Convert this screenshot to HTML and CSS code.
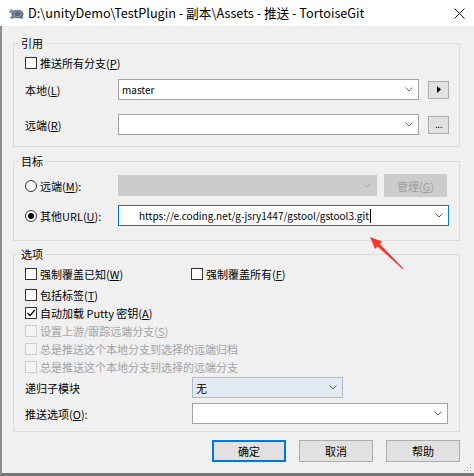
FILE: index.html
```html
<!DOCTYPE html>
<html lang="zh-CN">
<head>
<meta charset="utf-8">
<title>推送 - TortoiseGit</title>
<link rel="stylesheet" href="styles.css">
</head>
<body>
<div class="window">
  <div class="titlebar">
    <svg class="app-icon" viewBox="0 0 16 14" aria-hidden="true">
      <ellipse cx="3" cy="11.5" rx="1.8" ry="1.3" fill="#6b7b90"/>
      <ellipse cx="12.5" cy="11.5" rx="1.8" ry="1.3" fill="#6b7b90"/>
      <ellipse cx="8.5" cy="8" rx="6" ry="4.3" fill="#56677e"/>
      <path d="M5 6.5 L8.5 4.5 L12 6.5 L12 9.5 L8.5 11 L5 9.5 Z" fill="none" stroke="#9fb0c6" stroke-width="0.9"/>
      <circle cx="2.3" cy="5.3" r="2.1" fill="#7c8da4"/>
      <circle cx="1.6" cy="4.8" r="0.5" fill="#fff"/>
    </svg>
    <span class="title">D:\unityDemo\TestPlugin - 副本\Assets - 推送 - TortoiseGit</span>
    <svg class="close" viewBox="0 0 11 11" aria-hidden="true">
      <path d="M0.5 0.5 L10.5 10.5 M10.5 0.5 L0.5 10.5" stroke="#111" stroke-width="1"/>
    </svg>
  </div>

  <div class="dialog">
    <fieldset class="group g-ref">
      <legend>引用</legend>
      <div class="check"><span class="cb"></span>推送所有分支(<u>P</u>)</div>
      <div class="field ref-row r-local">
        <span class="lbl">本地(<u>L</u>)</span>
        <div class="combo"><span class="val lat">master</span><svg class="chev" viewBox="0 0 8 5"><path d="M0.5 0.5 L4 4 L7.5 0.5" fill="none" stroke="#666" stroke-width="1"/></svg></div>
        <div class="mini"><svg class="tri" viewBox="0 0 4 7"><path d="M0 0 L4 3.5 L0 7 Z" fill="#000"/></svg></div>
      </div>
      <div class="field ref-row r-remote">
        <span class="lbl">远端(<u>R</u>)</span>
        <div class="combo"><span class="val"></span><svg class="chev" viewBox="0 0 8 5"><path d="M0.5 0.5 L4 4 L7.5 0.5" fill="none" stroke="#666" stroke-width="1"/></svg></div>
        <div class="mini dots">...</div>
      </div>
    </fieldset>

    <fieldset class="group g-target">
      <legend>目标</legend>
      <div class="field t-row1">
        <span class="radio-lbl"><span class="rb"></span>远端(<u>M</u>):</span>
        <div class="combo disabled"><span class="val"></span><svg class="chev" viewBox="0 0 8 5"><path d="M0.5 0.5 L4 4 L7.5 0.5" fill="none" stroke="#aaa" stroke-width="1"/></svg></div>
        <div class="btn manage">管理(<u>G</u>)</div>
      </div>
      <div class="field t-row2">
        <span class="radio-lbl"><span class="rb on"></span>其他URL(<u>U</u>):</span>
        <div class="combo focus"><span class="val url lat">https://e.coding.net/g-jsry1447/gstool/gstool3.git<span class="caret"></span></span><svg class="chev" viewBox="0 0 8 5"><path d="M0.5 0.5 L4 4 L7.5 0.5" fill="none" stroke="#555" stroke-width="1"/></svg></div>
      </div>
    </fieldset>

    <fieldset class="group g-opts">
      <legend>选项</legend>
      <div class="opt-row first">
        <div class="check"><span class="cb"></span>强制覆盖已知(<u>W</u>)</div>
        <div class="check"><span class="cb"></span>强制覆盖所有(<u>F</u>)</div>
      </div>
      <div class="opt-row"><div class="check"><span class="cb"></span>包括标签(<u>T</u>)</div></div>
      <div class="opt-row"><div class="check"><span class="cb checked"><svg viewBox="0 0 10 10"><path d="M1.5 5 L4 7.5 L8.8 2" fill="none" stroke="#000" stroke-width="1.2"/></svg></span>自动加载 Putty 密钥(<u>A</u>)</div></div>
      <div class="opt-row"><div class="check off"><span class="cb"></span>设置上游/跟踪远端分支(<u>S</u>)</div></div>
      <div class="opt-row"><div class="check off"><span class="cb"></span>总是推送这个本地分支到选择的远端归档</div></div>
      <div class="opt-row"><div class="check off"><span class="cb"></span>总是推送这个本地分支到选择的远端分支</div></div>
      <div class="sub-row s-rec">
        <span class="lbl">递归子模块</span>
        <div class="combo hover"><span class="val">无</span><svg class="chev" viewBox="0 0 8 5"><path d="M0.5 0.5 L4 4 L7.5 0.5" fill="none" stroke="#666" stroke-width="1"/></svg></div>
      </div>
      <div class="sub-row s-push">
        <span class="lbl">推送选项(<u>O</u>):</span>
        <div class="combo"><span class="val"></span><svg class="chev" viewBox="0 0 8 5"><path d="M0.5 0.5 L4 4 L7.5 0.5" fill="none" stroke="#666" stroke-width="1"/></svg></div>
      </div>
    </fieldset>

    <div class="actions">
      <div class="btn default">确定</div>
      <div class="btn">取消</div>
      <div class="btn">帮助</div>
    </div>
  </div>

  <svg class="annot" viewBox="360 228 50 45" aria-hidden="true">
    <path d="M370 237 L382.3 241.4 L379.9 244.0 L403.5 268.5 L402.5 269 L377.6 246.5 L375.1 249.1 Z" fill="#ee3b2e"/>
  </svg>
  <svg class="grip" viewBox="0 0 9 9" aria-hidden="true">
    <rect x="7" y="1" width="1" height="1" fill="#aaa"/>
    <rect x="4" y="4" width="1" height="1" fill="#aaa"/>
    <rect x="7" y="4" width="1" height="1" fill="#aaa"/>
    <rect x="1" y="7" width="1" height="1" fill="#aaa"/>
    <rect x="4" y="7" width="1" height="1" fill="#aaa"/>
    <rect x="7" y="7" width="1" height="1" fill="#aaa"/>
  </svg>
</div>
</body>
</html>
```

FILE: styles.css
```css
* { box-sizing: border-box; }
html, body { margin: 0; padding: 0; }
body {
  width: 474px;
  height: 476px;
  overflow: hidden;
  background: #f0f0f0;
  font-family: "Noto Sans CJK SC", "Noto Sans", sans-serif;
  font-size: 11px;
  line-height: 16px;
  color: #000;
}
u { text-decoration: underline; text-underline-offset: 1px; }

.window {
  position: relative;
  width: 474px;
  height: 476px;
  display: flex;
  flex-direction: column;
}

.titlebar {
  height: 26px;
  flex: none;
  background: #fff;
  display: flex;
  align-items: center;
  padding-left: 9px;
}
.app-icon { width: 16px; height: 14px; margin-right: 3px; flex: none; }
.title { flex: 1; font-size: 12.7px; white-space: nowrap; color: #000; }
.close { width: 11px; height: 11px; margin-right: 9px; flex: none; }

.dialog {
  flex: 1;
  border-left: 2px solid #8e8e8e;
  border-bottom: 3px solid #767676;
  padding: 9px 0 0 11px;
}

.group {
  width: 447px;
  margin: 0;
  min-width: 0;
  border: 1px solid #dcdcdc;
  padding: 0 10px 0 11px;
}
.group legend {
  margin-left: -6px;
  padding: 0 2px;
  height: 16px;
  line-height: 16px;
}

.g-ref { padding-top: 4px; padding-bottom: 11px; }
.g-target { margin-top: 6px; padding-top: 5px; padding-bottom: 14px; }
.g-opts { margin-top: 5px; padding-top: 3px; padding-bottom: 7px; }

.check {
  display: flex;
  align-items: center;
  height: 16px;
  white-space: nowrap;
}
.cb {
  width: 12px;
  height: 12px;
  flex: none;
  border: 1px solid #333;
  background: #fff;
  margin-right: 3px;
  display: flex;
}
.cb svg { width: 10px; height: 10px; }
.check.off { color: #a3a3a3; }
.check.off .cb { border-color: #cdcdcd; background: #f3f3f3; }

.field {
  display: grid;
  align-items: center;
}
.ref-row { grid-template-columns: 84px 301px 21px; column-gap: 9px; }
.r-local { margin-top: 8px; }
.r-remote { margin-top: 14px; }

.lbl { white-space: nowrap; }

.combo {
  height: 21px;
  border: 1px solid #a2a2a2;
  background: #fff;
  display: flex;
  align-items: center;
  padding: 0 5px 0 3px;
}
.combo .val { flex: 1; white-space: nowrap; display: flex; align-items: center; }
.lat { font-size: 10px; }
.chev { width: 8px; height: 5px; flex: none; }
.combo.disabled { background: #cccccc; border-color: #cccccc; }
.combo.focus { border-color: #0078d7; }
.combo.hover { background: #e4eaf1; border-color: #a9bdd2; }
.val.url { padding-left: 17px; }
.caret { display: inline-block; width: 1px; height: 14px; background: #000; margin-left: 1px; }

.mini {
  width: 21px;
  height: 18px;
  border: 1px solid #adadad;
  background: #e1e1e1;
  display: flex;
  align-items: center;
  justify-content: center;
}
.tri { width: 4px; height: 7px; }
.dots { font-size: 10px; line-height: 10px; letter-spacing: -0.5px; padding-bottom: 2px; }

.radio-lbl { display: flex; align-items: center; white-space: nowrap; }
.rb {
  width: 12px;
  height: 12px;
  flex: none;
  border: 1px solid #333;
  border-radius: 50%;
  background: #fff;
  margin-right: 3px;
  display: flex;
  align-items: center;
  justify-content: center;
}
.rb.on::after {
  content: "";
  width: 6px;
  height: 6px;
  border-radius: 50%;
  background: #000;
}

.t-row1 { grid-template-columns: 86px 259px 63px; column-gap: 7px; height: 23px; }
.t-row2 { grid-template-columns: 93px 331px; margin-top: 8px; }

.btn {
  height: 23px;
  border: 1px solid #adadad;
  background: #e1e1e1;
  display: flex;
  align-items: center;
  justify-content: center;
  white-space: nowrap;
}
.btn.manage { background: #cccccc; border-color: #cccccc; color: #a0a0a0; }

.opt-row {
  display: grid;
  grid-template-columns: 166px auto;
  height: 18px;
  align-items: center;
}
.opt-row.first { margin-bottom: 3px; }

.sub-row { display: grid; align-items: center; }
.s-rec { grid-template-columns: 167px 151px; margin-top: 1px; }
.s-push { grid-template-columns: 167px 256px; margin-top: 5px; }

.actions {
  width: 447px;
  margin-top: 8px;
  display: flex;
  justify-content: flex-end;
  gap: 13px;
}
.actions .btn { width: 74px; height: 22px; }
.btn.default { border-color: #0078d7; box-shadow: inset 0 0 0 1px #0078d7; }

.annot {
  position: absolute;
  left: 360px;
  top: 228px;
  width: 50px;
  height: 45px;
}
.grip {
  position: absolute;
  right: 2px;
  bottom: 4px;
  width: 9px;
  height: 9px;
}
```
